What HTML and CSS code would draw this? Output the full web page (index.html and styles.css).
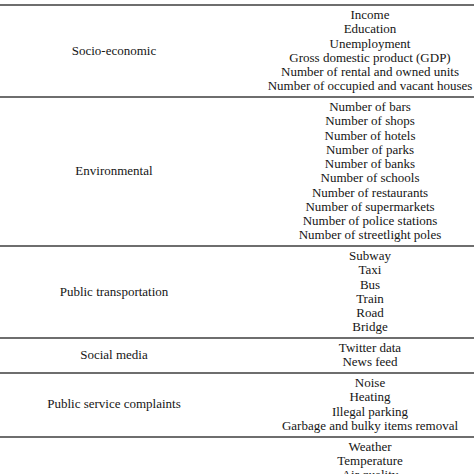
FILE: index.html
```html
<!DOCTYPE html>
<html>
<head>
<meta charset="utf-8">
<link rel="stylesheet" href="styles.css">
</head>
<body>
<table class="data">
  <tbody>
    <tr>
      <td class="cat">Socio-economic</td>
      <td class="items">Income<br>Education<br>Unemployment<br>Gross domestic product (GDP)<br>Number of rental and owned units<br>Number of occupied and vacant houses</td>
    </tr>
    <tr>
      <td class="cat">Environmental</td>
      <td class="items">Number of bars<br>Number of shops<br>Number of hotels<br>Number of parks<br>Number of banks<br>Number of schools<br>Number of restaurants<br>Number of supermarkets<br>Number of police stations<br>Number of streetlight poles</td>
    </tr>
    <tr>
      <td class="cat">Public transportation</td>
      <td class="items">Subway<br>Taxi<br>Bus<br>Train<br>Road<br>Bridge</td>
    </tr>
    <tr>
      <td class="cat">Social media</td>
      <td class="items">Twitter data<br>News feed</td>
    </tr>
    <tr>
      <td class="cat">Public service complaints</td>
      <td class="items">Noise<br>Heating<br>Illegal parking<br>Garbage and bulky items removal</td>
    </tr>
    <tr>
      <td class="cat">Meteorological</td>
      <td class="items">Weather<br>Temperature<br>Air quality<br>Humidity<br>Wind speed<br>Precipitation<br>Snowfall<br>Visibility</td>
    </tr>
  </tbody>
</table>
</body>
</html>
```
FILE: styles.css
```css
html, body {
  margin: 0;
  padding: 0;
  background: #ffffff;
  overflow: hidden;
  width: 474px;
  height: 474px;
}
.data {
  margin-top: 4px;
  width: 512px;
  border-collapse: collapse;
  border-top: 2px solid #6e6e6e;
  font-family: "Liberation Serif", "Times New Roman", serif;
  font-size: 13px;
  line-height: 14.25px;
  color: #151515;
}
.data td {
  padding: 2px 0 2.5px 0;
  border-bottom: 2px solid #6e6e6e;
  text-align: center;
  vertical-align: middle;
}
.data td.cat {
  width: 228px;
}
.data td.items {
  width: 284px;
}
```
